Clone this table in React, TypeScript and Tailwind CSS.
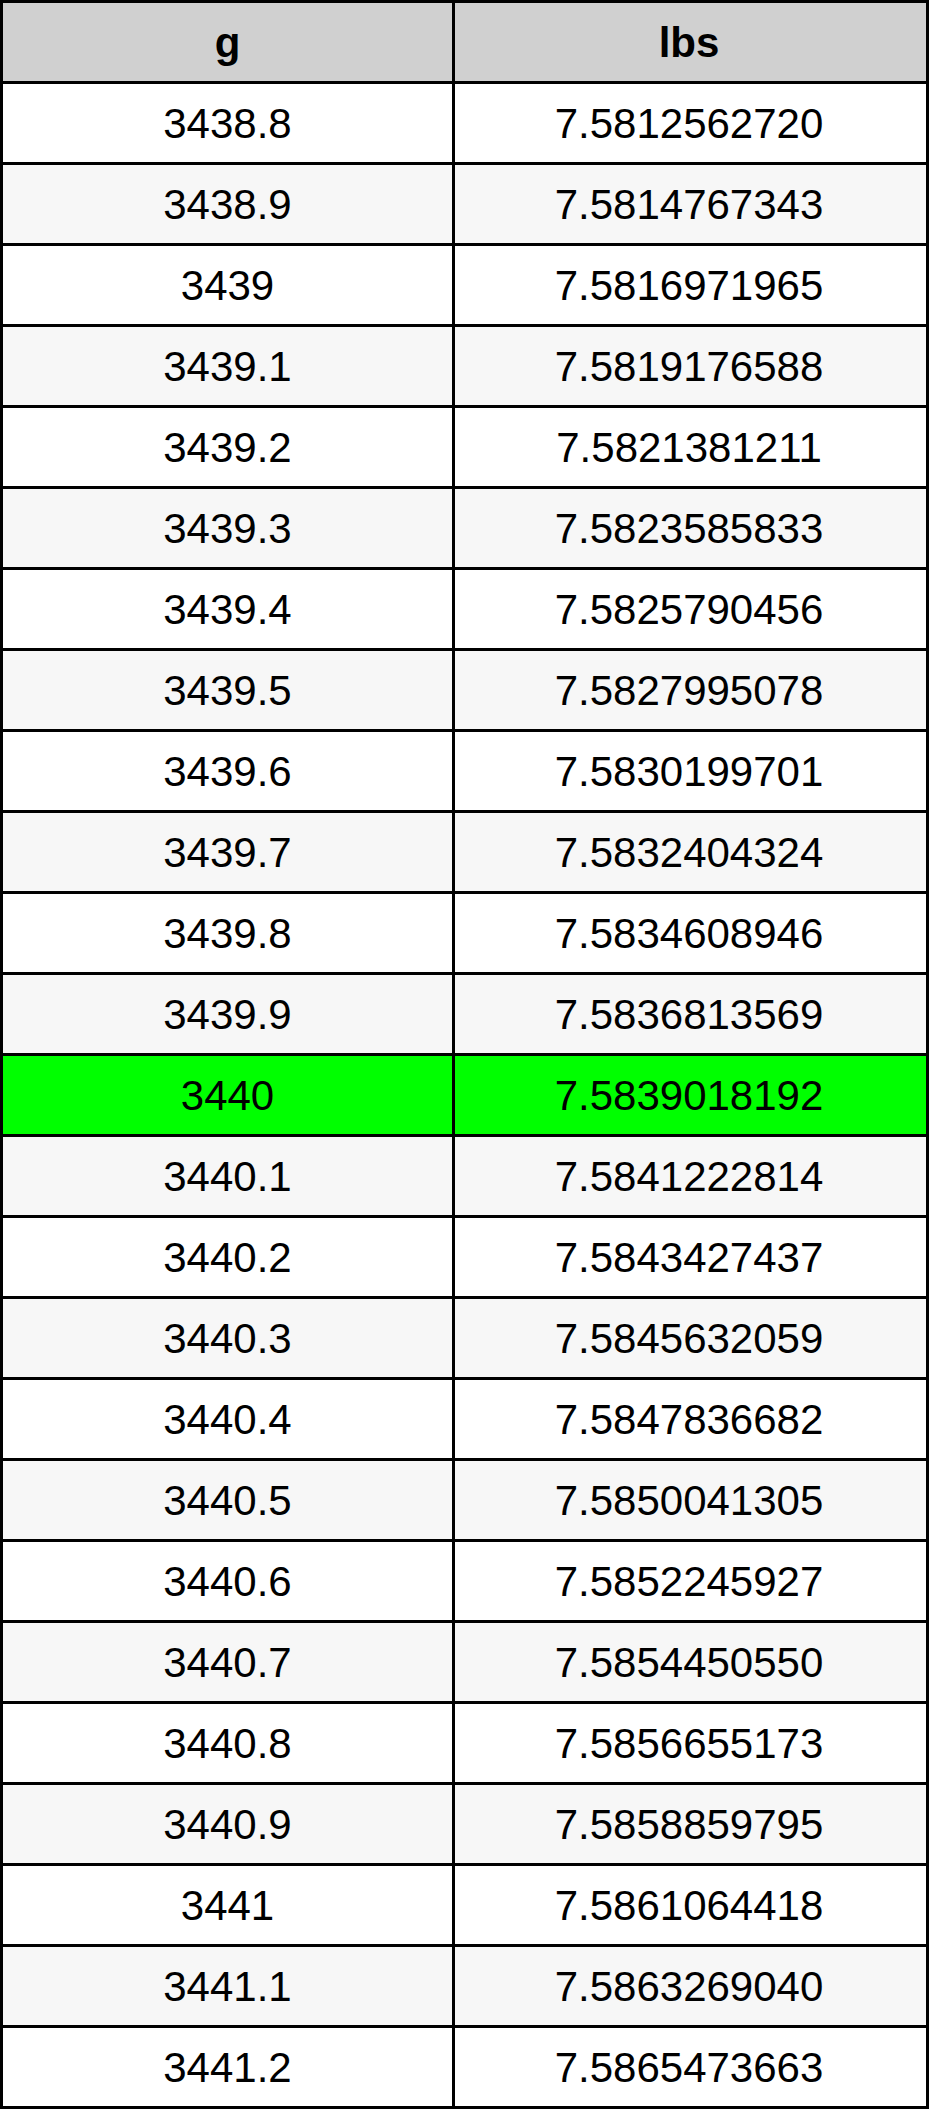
const rows: [string, string][] = [
  ["3438.8", "7.5812562720"],
  ["3438.9", "7.5814767343"],
  ["3439", "7.5816971965"],
  ["3439.1", "7.5819176588"],
  ["3439.2", "7.5821381211"],
  ["3439.3", "7.5823585833"],
  ["3439.4", "7.5825790456"],
  ["3439.5", "7.5827995078"],
  ["3439.6", "7.5830199701"],
  ["3439.7", "7.5832404324"],
  ["3439.8", "7.5834608946"],
  ["3439.9", "7.5836813569"],
  ["3440", "7.5839018192"],
  ["3440.1", "7.5841222814"],
  ["3440.2", "7.5843427437"],
  ["3440.3", "7.5845632059"],
  ["3440.4", "7.5847836682"],
  ["3440.5", "7.5850041305"],
  ["3440.6", "7.5852245927"],
  ["3440.7", "7.5854450550"],
  ["3440.8", "7.5856655173"],
  ["3440.9", "7.5858859795"],
  ["3441", "7.5861064418"],
  ["3441.1", "7.5863269040"],
  ["3441.2", "7.5865473663"],
];

export default function App() {
  return (
    <div className="bg-white" style={{ fontFamily: '"Liberation Sans", Arial, sans-serif' }}>
      <div className="w-[929px] border-[3px] border-black text-black">
        <div className="grid grid-cols-[452px_468px] h-[78px] bg-[#d0d0d0] font-bold text-[42px]">
          <div className="flex items-center justify-center border-r-[3px] border-black">g</div>
          <div className="flex items-center justify-center">lbs</div>
        </div>
        {rows.map(([g, lbs], i) => {
          const bg = g === "3440" ? "bg-[#00ff00]" : i % 2 === 0 ? "bg-white" : "bg-[#f7f7f7]";
          return (
            <div
              key={g}
              className={`grid grid-cols-[452px_468px] h-[81px] border-t-[3px] border-black text-[42px] ${bg}`}
            >
              <div className="flex items-center justify-center border-r-[3px] border-black">{g}</div>
              <div className="flex items-center justify-center">{lbs}</div>
            </div>
          );
        })}
      </div>
    </div>
  );
}
